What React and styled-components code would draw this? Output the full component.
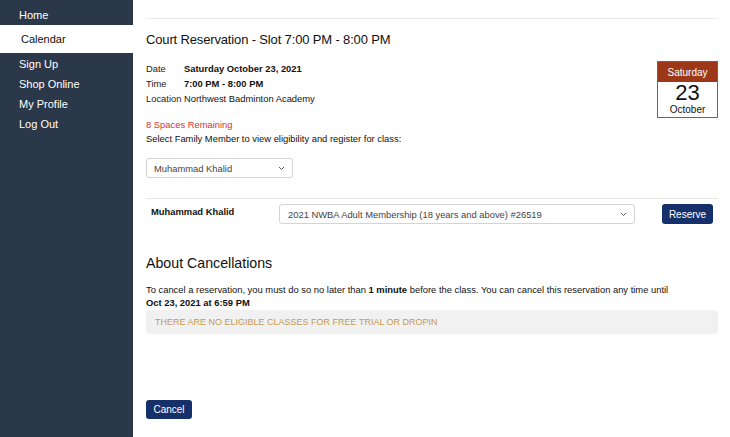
import React from "react";
import styled, { createGlobalStyle } from "styled-components";

const Global = createGlobalStyle`
  html, body { margin: 0; padding: 0; background: #fff; }
  body { font-family: "Liberation Sans", Arial, Helvetica, sans-serif; color: #111; }
  * { box-sizing: border-box; }
`;

const Page = styled.div`
  display: flex;
  min-height: 100vh;
  width: 730px;
`;

const Sidebar = styled.nav`
  width: 133px;
  flex: none;
  background: #2b3849;
  padding-top: 5px;
  display: flex;
  flex-direction: column;
`;

const NavItem = styled.a`
  display: flex;
  align-items: center;
  height: ${(p) => (p.$active ? "28px" : "20px")};
  margin-bottom: ${(p) => (p.$active ? "1px" : "0")};
  padding-left: ${(p) => (p.$active ? "21px" : "19px")};
  background: ${(p) => (p.$active ? "#fff" : "transparent")};
  color: ${(p) => (p.$active ? "#111" : "#fff")};
  font-size: 11px;
  text-decoration: none;
`;

const Main = styled.main`
  flex: 1;
  padding: 18px 12px 0 13px;
`;

const Rule = styled.div`
  border-top: 1px solid #ececec;
`;

const Title = styled.h1`
  margin: 12px 0 0;
  font-size: 13px;
  letter-spacing: -0.15px;
  line-height: 18px;
  font-weight: 400;
  color: #111;
`;

const InfoRow = styled.div`
  display: flex;
  justify-content: space-between;
  align-items: flex-start;
  margin-top: 12px;
`;

const Details = styled.div`
  display: grid;
  grid-template-columns: 38px auto;
  font-size: 9.4px;
  line-height: 15px;
`;

const Label = styled.span`
  color: #222;
`;

const Value = styled.span`
  color: #111;
  font-weight: ${(p) => (p.$plain ? 400 : 700)};
`;

const CalBox = styled.div`
  width: 61px;
  height: 57px;
  border: 1px solid #666;
  display: flex;
  flex-direction: column;
  align-items: center;
`;

const CalHead = styled.div`
  align-self: stretch;
  height: 20px;
  background: #9c3717;
  color: #fff;
  font-size: 10px;
  display: flex;
  align-items: center;
  justify-content: center;
`;

const CalDay = styled.div`
  font-size: 22px;
  line-height: 22px;
  color: #111;
`;

const CalMonth = styled.div`
  font-size: 10px;
  line-height: 12px;
  color: #111;
`;

const Remaining = styled.div`
  font-size: 9.4px;
  line-height: 14px;
  color: #d8322e;
`;

const Text = styled.div`
  font-size: 9.4px;
  line-height: 14px;
  color: #111;
`;

const SelectBox = styled.div`
  position: relative;
  width: ${(p) => p.$w};
  height: 20px;
  border: 1px solid #d4d4d4;
  border-radius: 3px;
  background: #fff;
  display: flex;
  align-items: center;
  padding-left: ${(p) => p.$pl || "7px"};
  font-size: 9.4px;
  color: #444;
  flex: none;
`;

const Chevron = styled.svg`
  position: absolute;
  right: 7px;
  top: 7px;
`;

const FamilySelect = styled(SelectBox)`
  margin-top: 12px;
`;

const Separator = styled.div`
  margin-top: 20px;
  border-top: 1px solid #e6e6e6;
`;

const MemberRow = styled.div`
  display: flex;
  align-items: flex-start;
  padding-top: 5px;
`;

const MemberName = styled.div`
  width: 133px;
  padding: 2px 0 0 5px;
  font-size: 9.4px;
  line-height: 12px;
  font-weight: 700;
  flex: none;
`;

const Button = styled.button`
  height: ${(p) => p.$h || "20px"};
  width: ${(p) => p.$w};
  padding: 0;
  border: none;
  border-radius: 3px;
  background: #15306a;
  color: #fff;
  font-family: inherit;
  font-size: 10px;
  margin-left: ${(p) => p.$ml || "0"};
  flex: none;
`;

const Heading = styled.h2`
  margin: 30px 0 0;
  font-size: 14.2px;
  line-height: 18px;
  font-weight: 400;
`;

const Paragraph = styled.p`
  margin: 11px 0 0;
  font-size: 9.4px;
  line-height: 13px;
`;

const Alert = styled.div`
  margin-top: 1px;
  height: 24px;
  border-radius: 3px;
  background: #f1f1f1;
  color: #c79a4e;
  font-size: 9px;
  display: flex;
  align-items: center;
  padding-left: 9px;
`;

const Footer = styled.div`
  margin-top: 65px;
`;

const ChevronIcon = () => (
  <Chevron width="7" height="5" viewBox="0 0 7 5">
    <path d="M1 1 L3.5 3.5 L6 1" fill="none" stroke="#555" strokeWidth="1" />
  </Chevron>
);

export default function App() {
  const nav = ["Home", "Calendar", "Sign Up", "Shop Online", "My Profile", "Log Out"];
  return (
    <>
      <Global />
      <Page>
        <Sidebar>
          {nav.map((n) => (
            <NavItem key={n} $active={n === "Calendar"}>
              {n}
            </NavItem>
          ))}
        </Sidebar>
        <Main>
          <Rule />
          <Title>Court Reservation - Slot 7:00 PM - 8:00 PM</Title>
          <InfoRow>
            <Details>
              <Label>Date</Label>
              <Value>Saturday October 23, 2021</Value>
              <Label>Time</Label>
              <Value>7:00 PM - 8:00 PM</Value>
              <Label>Location</Label>
              <Value $plain>Northwest Badminton Academy</Value>
            </Details>
            <CalBox>
              <CalHead>Saturday</CalHead>
              <CalDay>23</CalDay>
              <CalMonth>October</CalMonth>
            </CalBox>
          </InfoRow>
          <Remaining>8 Spaces Remaining</Remaining>
          <Text>Select Family Member to view eligibility and register for class:</Text>
          <FamilySelect $w="147px">
            Muhammad Khalid
            <ChevronIcon />
          </FamilySelect>
          <Separator />
          <MemberRow>
            <MemberName>Muhammad Khalid</MemberName>
            <SelectBox $w="356px" $pl="8px">
              2021 NWBA Adult Membership (18 years and above) #26519
              <ChevronIcon />
            </SelectBox>
            <Button $w="51px" $ml="27px">Reserve</Button>
          </MemberRow>
          <Heading>About Cancellations</Heading>
          <Paragraph>
            To cancel a reservation, you must do so no later than <b>1 minute</b> before the class. You can
            cancel this reservation any time until
            <br />
            <b>Oct 23, 2021 at 6:59 PM</b>
          </Paragraph>
          <Alert>THERE ARE NO ELIGIBLE CLASSES FOR FREE TRIAL OR DROPIN</Alert>
          <Footer>
            <Button $w="46px" $h="19px">Cancel</Button>
          </Footer>
        </Main>
      </Page>
    </>
  );
}
